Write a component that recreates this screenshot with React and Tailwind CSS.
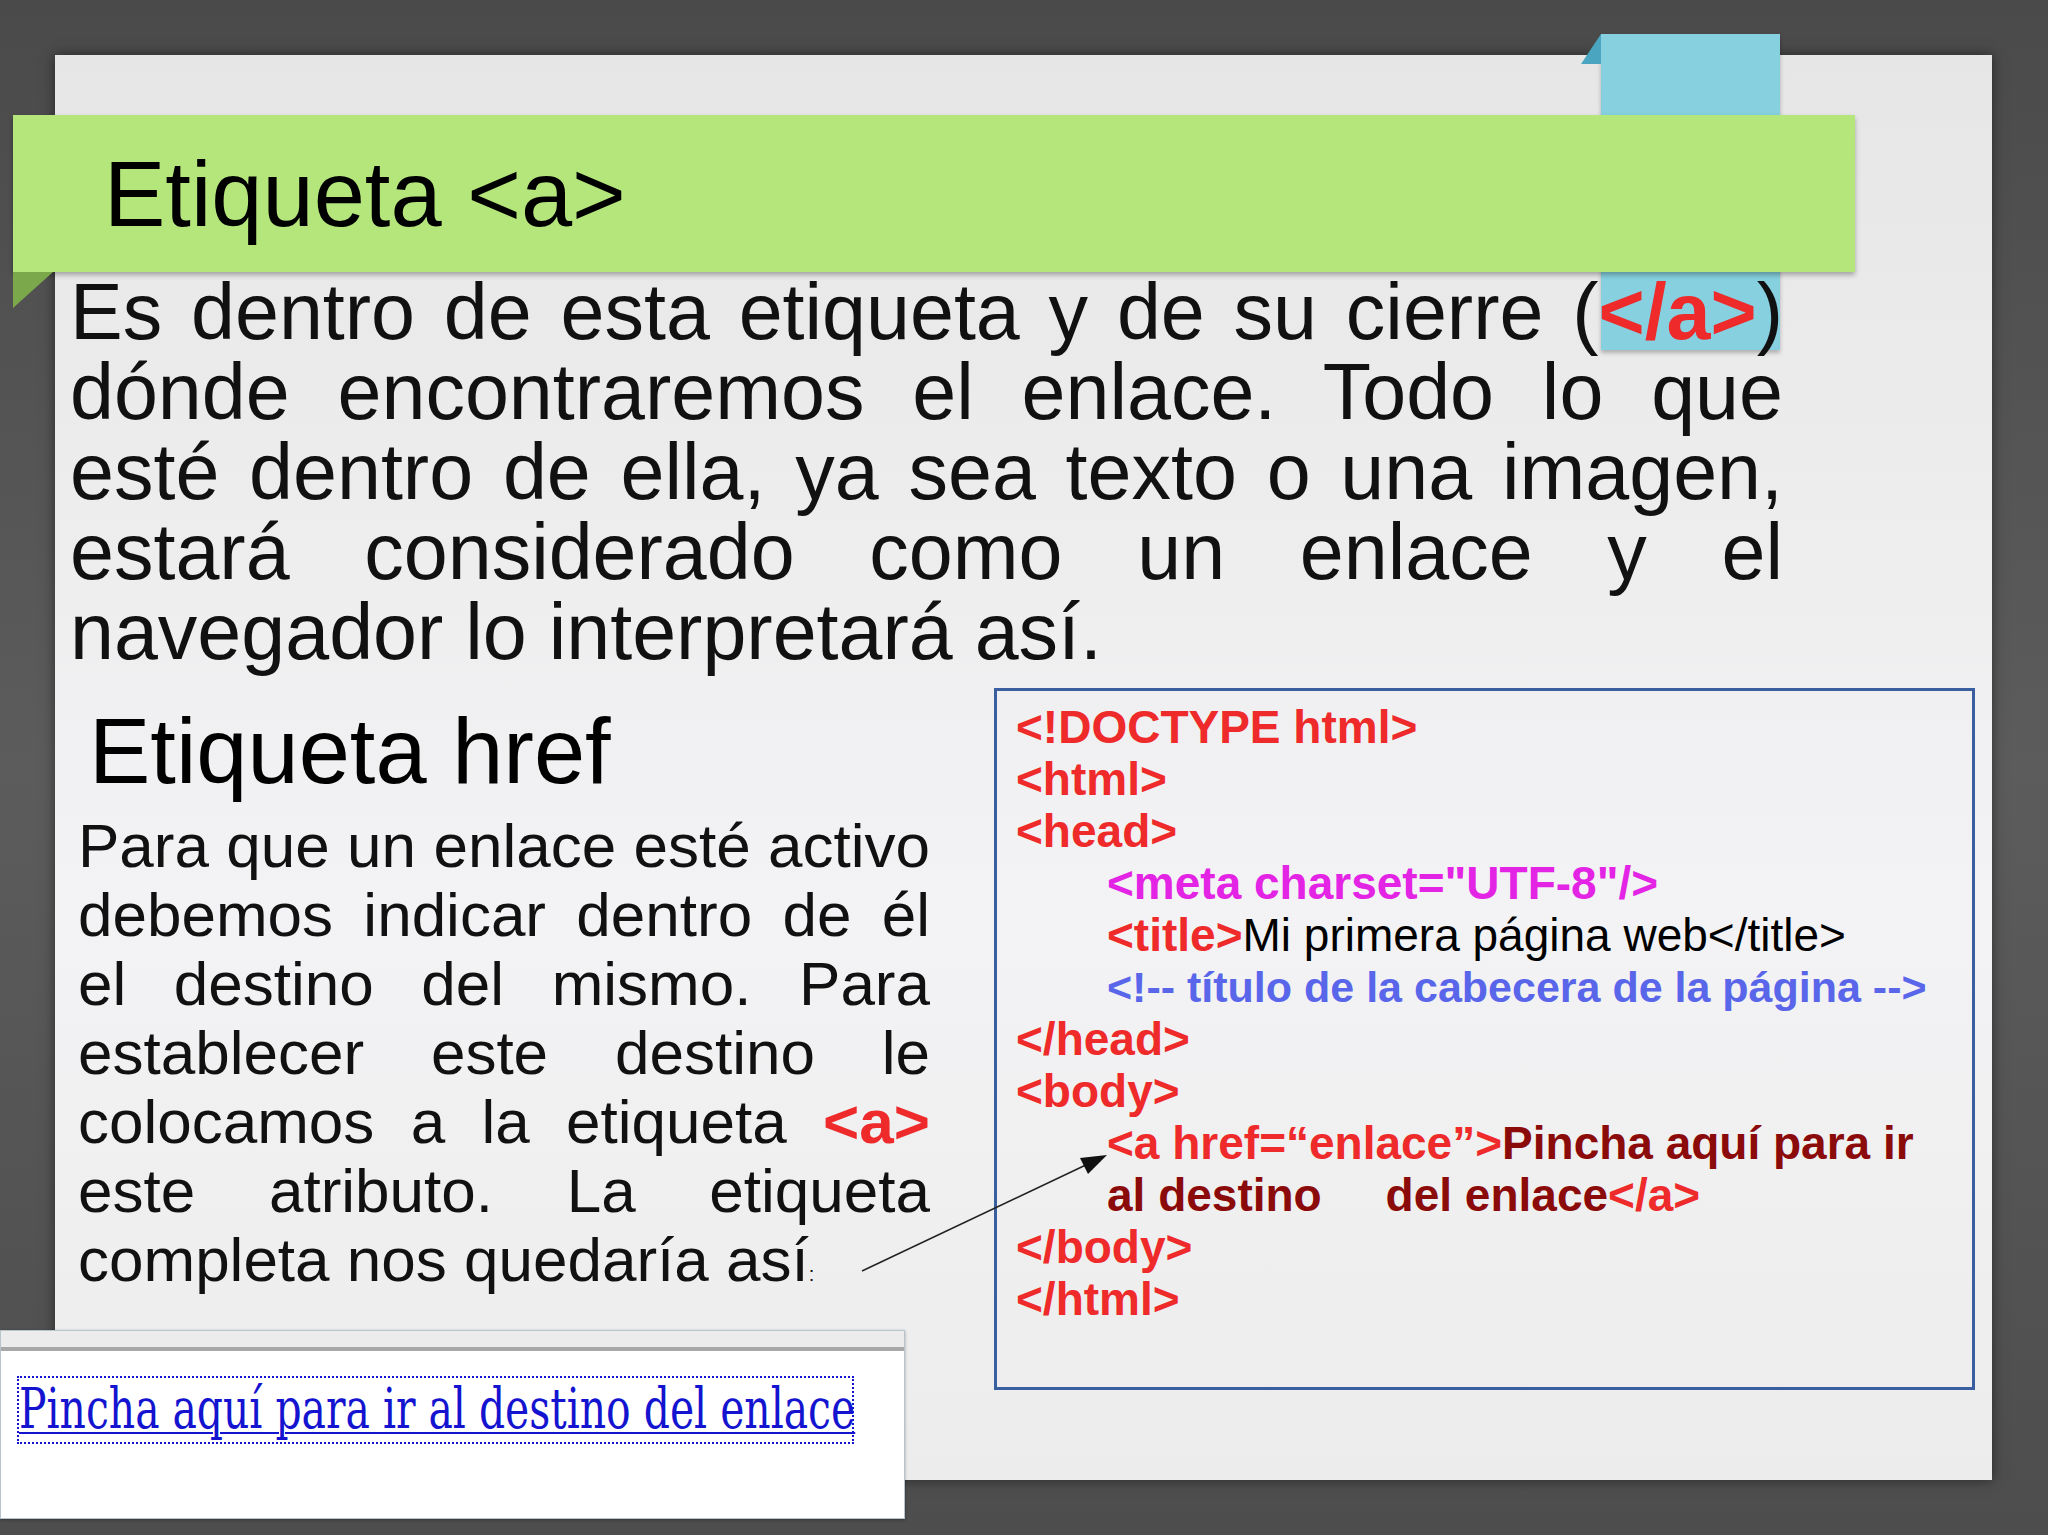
export default function App() {
  const code = "font-bold";
  return (
    <div className="relative w-[2048px] h-[1535px] overflow-hidden bg-[linear-gradient(180deg,#4a4a4a,#5c5c5c_50%,#4d4d4d)]" style={{ fontFamily: '"Liberation Sans", Arial, sans-serif' }}>
      <div className="relative ml-[55px] top-[55px] w-[1937px] h-[1425px] pt-[60px] bg-[linear-gradient(180deg,#e6e6e6,#f3f3f5_60%,#ececec)] shadow-[0_0_12px_rgba(0,0,0,0.5)]">
        {/* blue tab */}
        <div className="absolute left-[1546px] top-[-21px] w-[179px] h-[316px] bg-[#86d0e0] shadow-[0_3px_4px_rgba(0,0,0,0.25)]" />
        <div className="absolute left-[1526px] top-[-21px] w-0 h-0 border-l-[20px] border-l-transparent border-b-[30px] border-b-[#4aa6c0]" />
        {/* green banner */}
        <div className="relative ml-[-42px] w-[1842px] h-[157px] bg-[#b5e67c] shadow-[0_3px_5px_rgba(0,0,0,0.3)] flex items-center pl-[91px]">
          <span className="text-[92px] leading-none text-black">Etiqueta &lt;a&gt;</span>
          <div className="absolute left-0 top-[157px] w-0 h-0 border-r-[40px] border-r-transparent border-t-[36px] border-t-[#7aa84a]" />
        </div>
        <p className="relative ml-[15px] w-[1713px] text-[79px] leading-[80px] text-justify text-[#111]">
          Es dentro de esta etiqueta y de su cierre (<span className="text-[#ee2a2a] font-bold">&lt;/a&gt;</span>) dónde encontraremos el enlace. Todo lo que esté dentro de ella, ya sea texto o una imagen, estará considerado como un enlace y el navegador lo interpretará así.
        </p>
        <div className="flex ml-[23px] mt-[16px] gap-[64px]">
          <div className="w-[852px] pt-[15px]">
            <div className="text-[92px] leading-[96px] ml-[11px] text-black">Etiqueta href</div>
            <p className="mt-[12px] text-[62px] leading-[69px] text-justify text-[#111]">
              Para que un enlace esté activo debemos indicar dentro de él el destino del mismo. Para establecer este destino le colocamos a la etiqueta <span className="text-[#ee2a2a] font-bold">&lt;a&gt;</span> este atributo. La etiqueta completa nos quedaría así<span className="text-[20px]">:</span>
            </p>
          </div>
          <div className="w-[981px] h-[702px] shrink-0 border-[3px] border-[#3a5fa0] pl-[19px] pt-[10px] text-[46px] leading-[52px]">
            <div className={`${code} text-[#ee2a2a]`}>&lt;!DOCTYPE html&gt;</div>
            <div className={`${code} text-[#ee2a2a]`}>&lt;html&gt;</div>
            <div className={`${code} text-[#ee2a2a]`}>&lt;head&gt;</div>
            <div className="pl-[91px]">
              <div className={`${code} text-[#e424e4]`}>&lt;meta charset="UTF-8"/&gt;</div>
              <div><span className={`${code} text-[#ee2a2a]`}>&lt;title&gt;</span><span className="text-black">Mi primera página web&lt;/title&gt;</span></div>
              <div className={`${code} text-[#5a66ea] whitespace-nowrap text-[43px]`}>&lt;!-- título de la cabecera de la página --&gt;</div>
            </div>
            <div className={`${code} text-[#ee2a2a]`}>&lt;/head&gt;</div>
            <div className={`${code} text-[#ee2a2a]`}>&lt;body&gt;</div>
            <div className="pl-[91px]">
              <div className={`${code} whitespace-nowrap`}><span className="text-[#ee2a2a]">&lt;a href=“enlace”&gt;</span><span className="text-[#8b0a0a]">Pincha aquí para ir</span></div>
              <div className={`${code} whitespace-nowrap`}><span className="text-[#8b0a0a]">al destino&nbsp;&nbsp;&nbsp;&nbsp; del enlace</span><span className="text-[#ee2a2a]">&lt;/a&gt;</span></div>
            </div>
            <div className={`${code} text-[#ee2a2a]`}>&lt;/body&gt;</div>
            <div className={`${code} text-[#ee2a2a]`}>&lt;/html&gt;</div>
          </div>
        </div>
      </div>
      {/* arrow */}
      <svg className="absolute left-0 top-0 pointer-events-none" width="2048" height="1535">
        <line x1="862" y1="1271" x2="1090" y2="1163" stroke="#222" strokeWidth="1.5" />
        <polygon points="1107,1155 1080,1158 1088,1174" fill="#111" />
      </svg>
      {/* browser window */}
      <div className="absolute left-0 top-[1330px] w-[905px] h-[189px] bg-white border border-[#b8c4cc] shadow-[0_1px_3px_rgba(0,0,0,0.3)]">
        <div className="h-[20px] bg-[#ececec] border-b-[4px] border-b-[#a8a8a8]" />
        <div className="mt-[25px] ml-[16px] w-[837px] h-[68px] overflow-visible border-2 border-dotted border-[#1414d0] whitespace-nowrap">
          <span className="text-[#1414d0] underline decoration-2 underline-offset-[4px] text-[56px] leading-[62px] inline-block origin-left" style={{ fontFamily: '"DejaVu Serif", "Liberation Serif", serif', transform: 'scaleX(0.73)' }}>Pincha aquí para ir al destino del enlace</span>
        </div>
      </div>
    </div>
  );
}
